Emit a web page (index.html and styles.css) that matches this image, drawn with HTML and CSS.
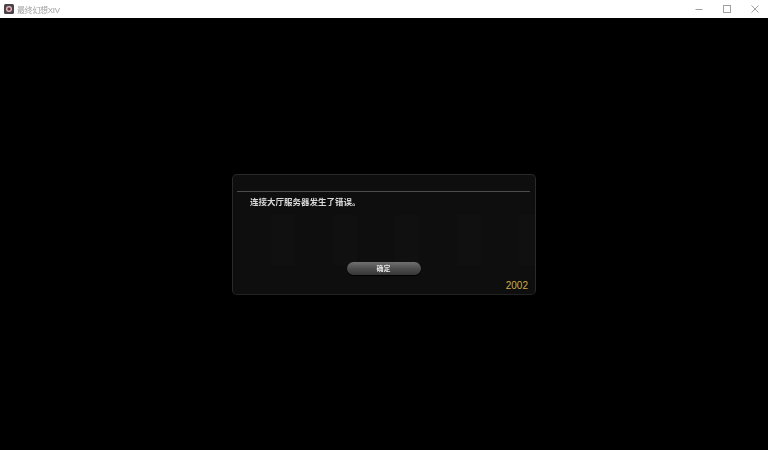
FILE: index.html
```html
<!DOCTYPE html>
<html lang="zh-CN">
<head>
  <meta charset="UTF-8">
  <meta name="viewport" content="width=device-width, initial-scale=1">
  <title>最终幻想XIV</title>
  <link rel="stylesheet" href="styles.css">
</head>
<body>

  <!-- Title bar -->
  <div class="titlebar">
    <svg class="app-icon" viewBox="0 0 10 10" width="10" height="10">
      <rect width="10" height="10" rx="1.5" fill="#4a4348"/>
      <circle cx="5" cy="5" r="3" fill="#d9c3c8"/>
      <circle cx="5" cy="5" r="1.8" fill="#a8404e"/>
      <circle cx="5" cy="5" r="0.8" fill="#2c2228"/>
    </svg>
    <span class="app-title">最终幻想XIV</span>
    <div class="win-controls">
      <svg viewBox="0 0 8 8" width="8" height="8"><path d="M0.5 4.5h7" stroke="#a0a0a0" fill="none"/></svg>
      <svg viewBox="0 0 8 8" width="8" height="8"><rect x="0.5" y="0.5" width="7" height="7" stroke="#a0a0a0" fill="none"/></svg>
      <svg viewBox="0 0 8 8" width="8" height="8"><path d="M0.5 0.5l7 7M7.5 0.5l-7 7" stroke="#a0a0a0" fill="none"/></svg>
    </div>
  </div>

  <!-- Game area -->
  <div class="game">
    <div class="dialog">
      <div class="dialog-head"></div>
      <p class="dialog-msg">连接大厅服务器发生了错误。</p>
      <div class="dialog-actions">
        <button class="ok-btn">确定</button>
      </div>
      <div class="error-code">2002</div>
    </div>
  </div>

</body>
</html>
```

FILE: styles.css
```css
* { margin: 0; padding: 0; box-sizing: border-box; }

html, body {
  width: 768px;
  height: 450px;
  overflow: hidden;
}

body {
  font-family: 'Liberation Sans', 'Noto Sans CJK SC', sans-serif;
  background-color: #000;
  display: flex;
  flex-direction: column;
}

.titlebar {
  height: 18px;
  flex-shrink: 0;
  background-color: #fff;
  display: flex;
  align-items: center;
  padding-left: 4px;
}

.app-icon {
  margin-right: 3px;
}

.app-title {
  font-size: 8px;
  letter-spacing: -0.3px;
  color: #a0a0a0;
  filter: blur(0.3px);
}

.win-controls {
  margin-left: auto;
  display: flex;
  align-items: center;
  gap: 20px;
  padding-right: 9px;
  padding-bottom: 1px;
}

.game {
  flex: 1;
  display: flex;
  justify-content: center;
  align-items: center;
}

.dialog {
  width: 304px;
  height: 121px;
  padding: 0 5px 0 4px;
  display: flex;
  flex-direction: column;
  background-color: #0e0e0e;
  background-image: repeating-linear-gradient(90deg, transparent 0 38px, #101010 38px 62px);
  background-size: 100% 50px;
  background-position: 0 40px;
  background-repeat: no-repeat;
  border: 1px solid #2a2a2a;
  border-bottom-color: #222;
  border-radius: 5px;
}

.dialog-head {
  height: 17px;
  flex-shrink: 0;
  border-bottom: 1px solid #4c4c4c;
}

.dialog-msg {
  margin-top: 4px;
  padding-left: 13px;
  font-size: 8.5px;
  line-height: 13px;
  font-weight: bold;
  color: #d8d8d8;
  filter: blur(0.25px);
}

.dialog-actions {
  margin-top: 53px;
  display: flex;
  justify-content: center;
}

.ok-btn {
  width: 74px;
  height: 13px;
  border: none;
  border-radius: 7px;
  background: linear-gradient(#707070, #4e4e4e 50%, #363636);
  box-shadow: 0 1px 1px #000;
  color: #e4e4e4;
  font-family: inherit;
  font-size: 7px;
  line-height: 13px;
  font-weight: bold;
  filter: blur(0.2px);
}

.error-code {
  margin-top: 4px;
  padding-right: 2px;
  text-align: right;
  font-size: 10px;
  line-height: 13px;
  color: #d2ac48;
}
```
